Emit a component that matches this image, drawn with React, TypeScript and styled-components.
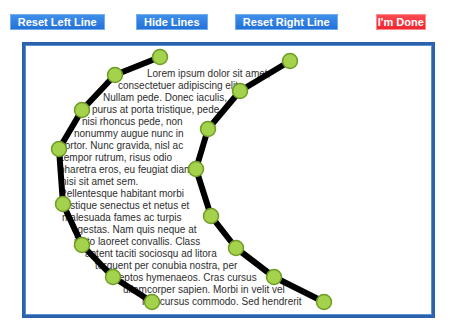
import React from 'react';
import styled, { createGlobalStyle } from 'styled-components';

const GlobalStyle = createGlobalStyle`
  html, body {
    margin: 0;
    padding: 0;
    background: #fff;
  }
  body {
    font-family: "Liberation Sans", Arial, sans-serif;
  }
`;

// text flow geometry (page coordinates)
const LINE = 12;
const INNER_LEFT = 25;
const INNER_RIGHT = 432;

const leftStarts = [147, 118, 103, 92, 82, 74, 62, 61, 59, 61, 60, 62, 62, 72, 74, 85, 95, 106, 123, 142];
const rightEnds = [275, 250, 232, 224, 215, 205, 203, 200, 198, 196, 198, 205, 210, 212, 218, 230, 250, 270, 294, 310];

const leftLine: [number, number][] = [
  [160, 57], [115, 75], [82, 110], [59, 149], [63, 204], [82, 245], [113, 277], [152, 302],
];
const rightLine: [number, number][] = [
  [290, 61], [240, 91], [208, 129], [196, 169], [211, 216], [236, 248], [274, 277], [324, 302],
];

const TEXT =
  'Lorem ipsum dolor sit amet, consectetuer adipiscing elit. Nullam pede. Donec iaculis, purus at porta tristique, pede nisi rhoncus pede, non nonummy augue nunc in tortor. Nunc gravida, nisl ac tempor rutrum, risus odio pharetra eros, eu feugiat diam nisi sit amet sem. Pellentesque habitant morbi tristique senectus et netus et malesuada fames ac turpis egestas. Nam quis neque at justo laoreet convallis. Class aptent taciti sociosqu ad litora torquent per conubia nostra, per inceptos hymenaeos. Cras cursus ullamcorper sapien. Morbi in velit vel nisl cursus commodo. Sed hendrerit lorem ipsum dolor.';

// builds a stepped polygon so each line box gets exactly one edge value
const stairs = (xs: number[], side: 'left' | 'right', edge: number) => {
  const pts: [number, number][] = [[edge, 0], [xs[0], 0]];
  xs.forEach((x, i) => {
    const next = xs[i + 1];
    if (next === undefined || next === x) return;
    const b = (i + 1) * LINE;
    const tighter = side === 'left' ? next > x : next < x;
    if (tighter) pts.push([x, b + 0.5], [next, b + 1]);
    else pts.push([x, b - 1], [next, b - 0.5]);
  });
  const h = xs.length * LINE;
  pts.push([xs[xs.length - 1], h], [edge, h]);
  return `polygon(${pts.map(([x, y]) => `${x}px ${y}px`).join(', ')})`;
};

const leftWidth = Math.max(...leftStarts) - INNER_LEFT;
const leftShape = stairs(leftStarts.map((x) => x - INNER_LEFT), 'left', 0);
const rightWidth = INNER_RIGHT - Math.min(...rightEnds);
const rightShape = stairs(
  rightEnds.map((x) => x - (INNER_RIGHT - rightWidth)),
  'right',
  rightWidth
);

const Page = styled.div`
  width: 450px;
  height: 322px;
  overflow: hidden;
`;

const Toolbar = styled.div`
  display: grid;
  grid-template-columns: repeat(4, 1fr);
  justify-items: center;
  width: 458px;
  padding-top: 14px;
`;

const Button = styled.button<{ $danger?: boolean }>`
  height: 16px;
  margin: 0;
  padding: ${(p) => (p.$danger ? '0 1px' : '0 7px')};
  border: 1px solid ${(p) => (p.$danger ? '#ff8a8a' : '#71aef0')};
  border-radius: 0;
  background: ${(p) =>
    p.$danger
      ? 'linear-gradient(#fb4a52, #ee2631)'
      : 'linear-gradient(#3f90ea, #2370d8)'};
  color: #fff;
  font-family: "Liberation Sans", Arial, sans-serif;
  font-size: 11px;
  font-weight: bold;
  line-height: 14px;
  white-space: nowrap;
  cursor: pointer;
`;

const Stage = styled.div`
  position: relative;
  box-sizing: border-box;
  width: 413px;
  height: 276px;
  margin: 12px 0 0 22px;
  border: 3px solid #2b62ad;
  box-shadow: inset 0 0 0 1px #5f8fcf;
  background: #fff;
`;

const Flow = styled.div`
  height: ${LINE * 20}px;
  margin-top: 23px;
  overflow: hidden;
  font-size: 10px;
  line-height: ${LINE}px;
  color: #2e2e2e;
`;

const Exclusion = styled.div<{ $side: 'left' | 'right'; $w: number; $shape: string }>`
  float: ${(p) => p.$side};
  width: ${(p) => p.$w}px;
  height: ${LINE * 20}px;
  shape-outside: ${(p) => p.$shape};
`;

const Overlay = styled.svg`
  position: absolute;
  top: 0;
  left: 0;
  width: 407px;
  height: 270px;
  overflow: visible;
  pointer-events: none;
`;

const Handle = styled.circle`
  fill: #a4d24c;
  stroke: #6f9c24;
  stroke-width: 1.5;
`;

const Guide = ({ points }: { points: [number, number][] }) => (
  <g>
    <polyline
      points={points.map((p) => p.join(',')).join(' ')}
      fill="none"
      stroke="#000"
      strokeWidth={6}
      strokeLinejoin="round"
    />
    {points.map(([x, y], i) => (
      <Handle key={i} cx={x} cy={y} r={7.5} />
    ))}
  </g>
);

const App = () => {
  return (
    <Page>
      <GlobalStyle />
      <Toolbar>
        <Button>Reset Left Line</Button>
        <Button>Hide Lines</Button>
        <Button>Reset Right Line</Button>
        <Button $danger>I'm Done</Button>
      </Toolbar>
      <Stage>
        <Flow>
          <Exclusion $side="left" $w={leftWidth} $shape={leftShape} />
          <Exclusion $side="right" $w={rightWidth} $shape={rightShape} />
          {TEXT}
        </Flow>
        <Overlay viewBox="25 45 407 270">
          <Guide points={leftLine} />
          <Guide points={rightLine} />
        </Overlay>
      </Stage>
    </Page>
  );
};

export default App;
